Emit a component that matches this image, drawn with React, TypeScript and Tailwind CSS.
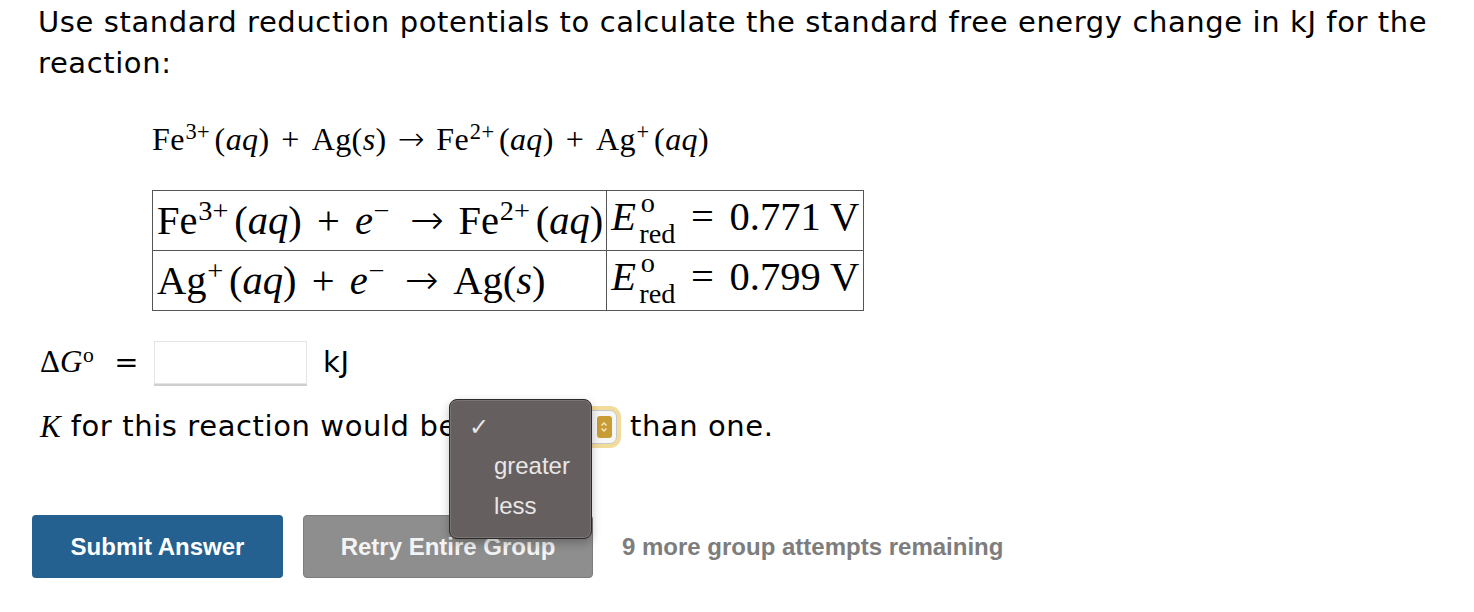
const serif = "font-['Liberation_Serif',serif]";

function Sup({ children }: { children: React.ReactNode }) {
  return <span className="align-[0.48em] text-[0.7em] leading-[0] ml-[0.03em] mr-[0.2em]">{children}</span>;
}

function I({ children }: { children: React.ReactNode }) {
  return <span className="italic">{children}</span>;
}

function Plus() {
  return <span className="inline-block w-[0.778em] mx-[0.27em] text-center">+</span>;
}

function Arrow() {
  return (
    <span className="inline-block w-[1em] mx-[0.278em] text-center font-['DejaVu_Sans',sans-serif] font-extralight">→</span>
  );
}

function Eq() {
  return <span className="inline-block w-[0.778em] mx-[0.278em] text-center">=</span>;
}

function Ered({ value }: { value: string }) {
  return (
    <span className="whitespace-nowrap">
      <I>E</I>
      <span className="relative inline-block align-[-0.48em] leading-[0.8] text-[0.7em] ml-[0.12em]">
        red
        <span className="absolute left-[0.05em] -top-[1.12em]">o</span>
      </span>
      <Eq />
      {value} V
    </span>
  );
}

export default function App() {
  return (
    <div className="w-[1474px] h-[612px] overflow-hidden bg-white text-black font-['DejaVu_Sans',sans-serif]">
      <div className="pl-[38px] pt-[2px]">
        <p className="text-[29px] tracking-[0.6px] leading-[41px] w-[1420px]">
          Use standard reduction potentials to calculate the standard free energy change in kJ for the reaction:
        </p>

        <div className={`${serif} ml-[114px] mt-[37px] h-[36px] text-[32px] tracking-[0.4px] leading-[36px] whitespace-nowrap`}>
          Fe<Sup>3+</Sup>(<I>aq</I>)<Plus />Ag(<I>s</I>)<Arrow />Fe<Sup>2+</Sup>(<I>aq</I>)<Plus />Ag<Sup>+</Sup>(<I>aq</I>)
        </div>

        <table className={`${serif} ml-[114px] mt-[33px] border-collapse text-[40.5px]`}>
          <tbody>
            <tr>
              <td className="h-[60px] p-0 border border-[#555] pl-[4px] pr-[3px] leading-[44px] whitespace-nowrap">
                Fe<Sup>3+</Sup>(<I>aq</I>)<Plus /><I>e</I><Sup>−</Sup><Arrow />Fe<Sup>2+</Sup>(<I>aq</I>)
              </td>
              <td className="h-[60px] p-0 border border-[#555] pl-[4px] pr-[4px] leading-[44px]">
                <Ered value="0.771" />
              </td>
            </tr>
            <tr>
              <td className="h-[60px] p-0 border border-[#555] pl-[4px] leading-[44px] whitespace-nowrap">
                Ag<Sup>+</Sup>(<I>aq</I>)<Plus /><I>e</I><Sup>−</Sup><Arrow />Ag(<I>s</I>)
              </td>
              <td className="h-[60px] p-0 border border-[#555] pl-[4px] pr-[4px] leading-[44px]">
                <Ered value="0.799" />
              </td>
            </tr>
          </tbody>
        </table>

        <div className="mt-[30px] flex items-center h-[43px] text-[29px] tracking-[0.6px]">
          <span className={`${serif} text-[31px] tracking-normal ml-[2px]`}>
            Δ<I>G</I><Sup>o</Sup>
          </span>
          <span className="ml-[16px]">=</span>
          <div className="ml-[15px] w-[153px] h-[43px] border border-[#e4e4e4] shadow-[0_2px_0_#cfcfcf] bg-white" />
          <span className="ml-[16px]">kJ</span>
        </div>

        <div className="mt-[20px] flex items-center h-[46px] text-[29px] tracking-[0.6px] whitespace-nowrap">
          <span className={`${serif} italic text-[31px] tracking-normal ml-[2px]`}>K</span>
          <span className="ml-[10px]">for this reaction would be</span>
          <div className="relative ml-[10px] w-[150px] h-[34px] rounded-[7px] bg-[#f7f7f7] border border-[#c8c8c8] shadow-[0_0_0_4px_#f2dc9c] flex items-center justify-end pr-[4px]">
            <div className="w-[15px] h-[22px] rounded-[3px] bg-[#c99d36] flex items-center justify-center">
              <svg width="8" height="12" viewBox="0 0 8 12" fill="none" stroke="#f5e6c0" strokeWidth="1.5">
                <path d="M1.5 4.5 L4 2 L6.5 4.5" />
                <path d="M1.5 7.5 L4 10 L6.5 7.5" />
              </svg>
            </div>
            <div className="absolute -left-[19px] -top-[12px] w-[143px] h-[140px] rounded-[8px] bg-[#655f5f] border border-[#2e2b2b] shadow-[inset_0_0_0_1px_#7a7474,0_4px_10px_rgba(0,0,0,0.25)] font-['Liberation_Sans',sans-serif] tracking-normal text-[#e9e6e6] text-[24px] leading-none">
              <div className="absolute left-[19px] top-[15px] text-[24px] font-['DejaVu_Sans',sans-serif]">✓</div>
              <div className="absolute left-[44px] top-[54px]">greater</div>
              <div className="absolute left-[44px] top-[94px]">less</div>
            </div>
          </div>
          <span className="ml-[13px]">than one.</span>
        </div>

        <div className="mt-[65px] -ml-[6px] flex items-center font-['Liberation_Sans',sans-serif] font-bold text-[24px]">
          <button className="w-[251px] h-[63px] rounded-[4px] bg-[#256190] text-white">Submit Answer</button>
          <button className="ml-[20px] w-[290px] h-[63px] rounded-[4px] bg-[#8e8e8e] border border-[#7c7c7c] text-[#f4f4f4]">
            Retry Entire Group
          </button>
          <span className="ml-[29px] text-[#7d7d7d]">9 more group attempts remaining</span>
        </div>
      </div>
    </div>
  );
}
